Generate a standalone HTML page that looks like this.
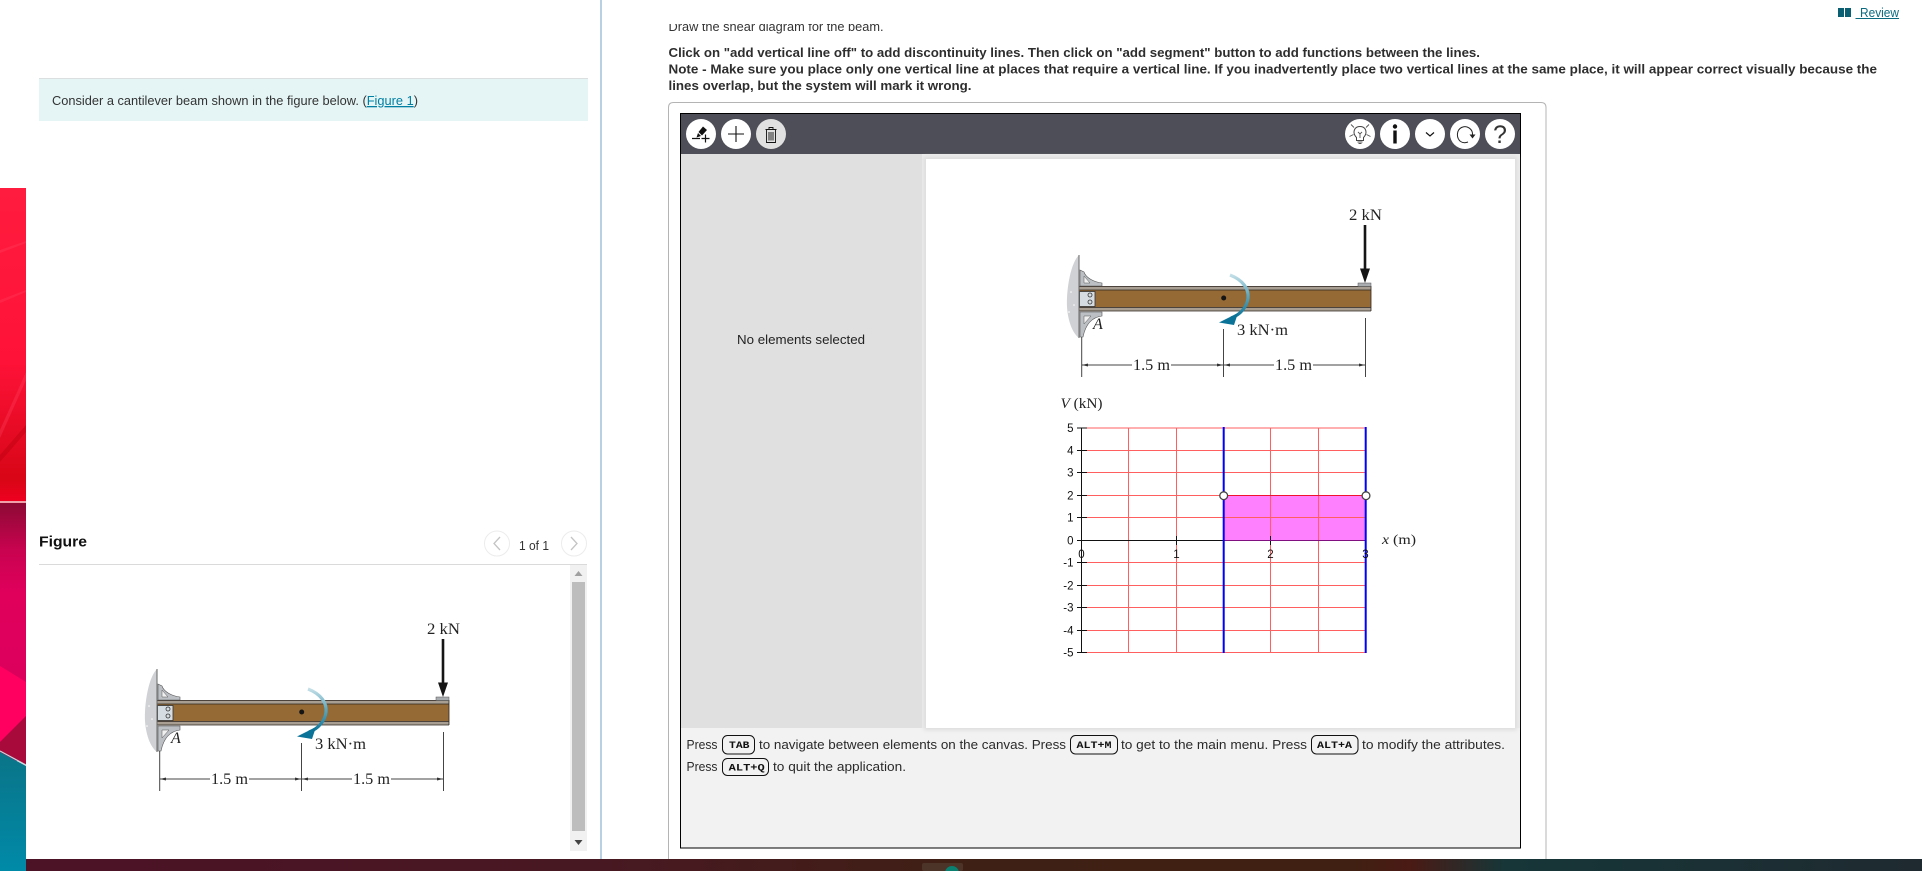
<!DOCTYPE html>
<html lang="en">
<head>
<meta charset="utf-8">
<title>Shear diagram</title>
<style>
html,body{margin:0;padding:0;background:#fff;width:1922px;height:871px;overflow:hidden}
svg{display:block;position:absolute;left:0;top:0}
text{font-family:"Liberation Sans",Arial,sans-serif;fill:#333}
.b{font-weight:700;font-size:13px;fill:#2e2e2e}
.h{font-size:13px;fill:#2a2a2a}
.k{font-family:"Liberation Mono",monospace;font-weight:700;font-size:10px;fill:#111}
.s{font-family:"Liberation Serif",serif;font-size:16px;fill:#222}
.t{font-size:11.5px;fill:#111}
</style>
</head>
<body>
<svg width="1922" height="871" viewBox="0 0 1922 871" xmlns="http://www.w3.org/2000/svg">
<defs>
<linearGradient id="red" x1="0" y1="0" x2="0" y2="1">
<stop offset="0" stop-color="#ff1c3e"/><stop offset=".55" stop-color="#ff1238"/><stop offset=".8" stop-color="#e40a22"/><stop offset=".93" stop-color="#d80616"/><stop offset="1" stop-color="#f00020"/>
</linearGradient>
<linearGradient id="crim" x1="0" y1="0" x2="0" y2="1">
<stop offset="0" stop-color="#8c0a34"/><stop offset=".18" stop-color="#c8034f"/><stop offset=".35" stop-color="#e0005c"/><stop offset="1" stop-color="#d8005c"/>
</linearGradient>
<linearGradient id="teal" x1="0" y1="0" x2="0" y2="1">
<stop offset="0" stop-color="#0a7488"/><stop offset="1" stop-color="#008aa8"/>
</linearGradient>
<linearGradient id="bar" x1="0" y1="0" x2="1" y2="0">
<stop offset="0" stop-color="#4c1226"/><stop offset=".3" stop-color="#481822"/><stop offset=".5" stop-color="#3f2014"/><stop offset=".7" stop-color="#402012"/><stop offset=".73" stop-color="#4a1a14"/><stop offset=".78" stop-color="#163638"/><stop offset="1" stop-color="#1f2a30"/>
</linearGradient>
<linearGradient id="arc" x1="0" y1="0" x2="0" y2="1">
<stop offset="0" stop-color="#c4dfe7"/><stop offset=".45" stop-color="#62aac0"/><stop offset="1" stop-color="#0b7397"/>
</linearGradient>
<clipPath id="cl"><rect x="660" y="24" width="300" height="12"/></clipPath>
<filter id="sh" x="-5%" y="-5%" width="110%" height="110%"><feGaussianBlur stdDeviation="2"/></filter>
<g id="beam">
<path d="M1079 255C1072 262 1068 280 1067 298C1066 315 1071 332 1079 338Z" fill="#d0d1d4"/>
<circle cx="1071" cy="292" r=".8" fill="#fff"/><circle cx="1074" cy="305" r=".8" fill="#fff"/><circle cx="1069" cy="312" r=".8" fill="#fff"/>
<path d="M1080 270L1084 272C1086 278 1094 282 1102 283V286H1080Z" fill="#bcc0c4" stroke="#555" stroke-width=".6"/>
<path d="M1084 276L1090 283H1084Z" fill="#f0f0f0" stroke="#555" stroke-width=".5"/>
<path d="M1080 337V312H1102V316C1094 317 1086 322 1083 337Z" fill="#bcc0c4" stroke="#555" stroke-width=".6"/>
<path d="M1084 316H1091L1084 324Z" fill="#f0f0f0" stroke="#555" stroke-width=".5"/>
<rect x="1079" y="286" width="292" height="25" fill="#956a35"/>
<rect x="1079" y="286" width="292" height="4" fill="#a89f92"/>
<rect x="1079" y="307" width="292" height="4" fill="#a89f92"/>
<path d="M1079 286.500H1371M1079 290H1371M1079 307.500H1371M1079 311H1371M1371 286V311" stroke="#2e2620" stroke-width=".8" fill="none"/>
<rect x="1079.500" y="291.500" width="15.500" height="15" fill="#d5dce2" stroke="#333" stroke-width=".8"/>
<circle cx="1090" cy="295" r="2" fill="none" stroke="#333" stroke-width=".8"/><circle cx="1090" cy="302" r="2" fill="none" stroke="#333" stroke-width=".8"/>
<rect x="1358" y="283" width="13" height="3.500" fill="#a9adb0" stroke="#555" stroke-width=".5"/>
<path d="M1079 255V338" stroke="#666" stroke-width="1"/>
<circle cx="1223.700" cy="298" r="2.500" fill="#151515"/>
<path d="M1230 275C1243 280 1249 289 1248 298C1247 307 1240 315 1231 318" fill="none" stroke="url(#arc)" stroke-width="3.200"/>
<path d="M1219 322.500L1238 313L1234 325Z" fill="#0b7397"/>
<path d="M1365 225V270" stroke="#151515" stroke-width="2.600"/>
<path d="M1360 268.500H1370L1365 283Z" fill="#151515"/>
<g stroke="#444" stroke-width="1" fill="none">
<path d="M1081.700 337V377M1223.500 329V377M1365.500 318V377"/>
<path d="M1082 365H1132M1171 365H1223M1224 365H1274M1313 365H1365"/>
</g>
<path d="M1082 365L1088 363.500V366.500ZM1223 365L1217 363.500V366.500ZM1224 365L1230 363.500V366.500ZM1365 365L1359 363.500V366.500Z" fill="#333"/>
</g>
</defs>

<!-- left wallpaper strip -->
<rect x="0" y="188" width="26" height="314" fill="url(#red)"/>
<path d="M0 250L26 241V243L0 253ZM0 300L26 290V292L0 303ZM0 430L26 372V380L0 438Z" fill="#ff4a62" opacity=".3"/>
<path d="M0 455L26 425V432L0 462Z" fill="#b80010" opacity=".4"/>
<rect x="0" y="501" width="26" height="2.500" fill="#f0a0a8"/>
<rect x="0" y="503" width="26" height="258" fill="url(#crim)"/>
<path d="M0 666L26 682V716L0 742Z" fill="#ff0060"/>
<path d="M0 742L26 716V765L0 752Z" fill="#a80a3c"/>
<path d="M0 752L26 766V871H0Z" fill="url(#teal)"/>
<path d="M0 751L26 765" stroke="#c8d8dc" stroke-width="1.200"/>

<!-- pane divider -->
<rect x="600" y="0" width="2" height="859" fill="#b9d0e2"/>

<!-- intro -->
<rect x="39" y="78" width="549" height="43" fill="#e5f5f5"/>
<rect x="39" y="78" width="549" height="1" fill="#dcdfdf"/>
<text x="52" y="105" textLength="366" lengthAdjust="spacingAndGlyphs" style="font-size:13px">Consider a cantilever beam shown in the figure below. (<tspan text-decoration="underline" style="fill:#007fa3">Figure 1</tspan>)</text>

<!-- figure panel -->
<text x="39" y="546.500" textLength="48" lengthAdjust="spacingAndGlyphs" style="font-size:15px;font-weight:700;fill:#111">Figure</text>
<circle cx="497" cy="543.500" r="12.500" fill="#fff" stroke="#ececec" stroke-width="1"/>
<path d="M500 537L494 543.500L500 550" fill="none" stroke="#c4c4c4" stroke-width="1.300"/>
<text x="519" y="550" textLength="30" lengthAdjust="spacingAndGlyphs" style="font-size:13px;fill:#333">1 of 1</text>
<circle cx="574" cy="543.500" r="12.500" fill="#fff" stroke="#ececec" stroke-width="1"/>
<path d="M571 537L577 543.500L571 550" fill="none" stroke="#c4c4c4" stroke-width="1.300"/>
<rect x="39" y="564" width="548" height="1" fill="#dadada"/>
<rect x="570" y="565" width="17" height="286" fill="#f1f1f1"/>
<rect x="572" y="582" width="13" height="249" fill="#bdbdbd"/>
<path d="M578.500 571L582.500 576H574.500Z" fill="#a0a0a0"/>
<path d="M578.500 845L582.500 840H574.500Z" fill="#444"/>

<g transform="translate(-922 414)">
<use href="#beam"/>
<text class="s" x="1349" y="220" textLength="33" lengthAdjust="spacingAndGlyphs">2 kN</text>
<text class="s" x="1237" y="335" textLength="51" lengthAdjust="spacingAndGlyphs">3 kN·m</text>
<text class="s" x="1093" y="329" style="font-style:italic">A</text>
<text class="s" x="1133" y="370" textLength="37" lengthAdjust="spacingAndGlyphs">1.5 m</text>
<text class="s" x="1275" y="370" textLength="37" lengthAdjust="spacingAndGlyphs">1.5 m</text>
</g>

<!-- review -->
<path d="M1838 8H1844V17H1838ZM1845 8H1851V17H1845Z" fill="#0a5f73"/>
<text x="1860" y="17" textLength="39" lengthAdjust="spacingAndGlyphs" style="font-size:13px;fill:#0a6a80">Review</text>
<rect x="1855.500" y="18" width="43.500" height="1" fill="#0a6a80"/>

<!-- instructions -->
<g clip-path="url(#cl)"><text x="668.500" y="31" textLength="215" lengthAdjust="spacingAndGlyphs" style="font-size:13px">Draw the shear diagram for the beam.</text></g>
<text class="b" x="668.500" y="57" textLength="811.500" lengthAdjust="spacingAndGlyphs">Click on "add vertical line off" to add discontinuity lines. Then click on "add segment" button to add functions between the lines.</text>
<text class="b" x="668.500" y="73.500" textLength="1208.500" lengthAdjust="spacingAndGlyphs">Note - Make sure you place only one vertical line at places that require a vertical line. If you inadvertently place two vertical lines at the same place, it will appear correct visually because the</text>
<text class="b" x="668.500" y="90" textLength="303" lengthAdjust="spacingAndGlyphs">lines overlap, but the system will mark it wrong.</text>

<!-- applet frame -->
<path d="M668.500 870V107.500Q668.500 102.500 673.500 102.500H1541Q1546 102.500 1546 107.500V870" fill="#fff" stroke="#b4b4b4" stroke-width="1"/>
<rect x="680.500" y="113.500" width="840" height="734.500" fill="#f2f2f2" stroke="#000" stroke-width="1"/>
<rect x="681" y="114" width="839" height="40" fill="#4d4e57"/>
<rect x="681" y="154" width="241" height="574" fill="#e0e0e0"/>
<rect x="922" y="154" width="598" height="574" fill="#ececec"/>
<rect x="924" y="157" width="593" height="573" fill="#dcdcdc" filter="url(#sh)"/>
<rect x="926" y="159" width="589" height="569" fill="#fff"/>

<!-- taskbar, above the applet frame -->
<rect x="26" y="859" width="1896" height="12" fill="url(#bar)"/>
<rect x="922" y="863" width="41" height="8" rx="2" fill="#4c3429"/>
<circle cx="952" cy="873" r="7" fill="#0a8070"/>

<!-- toolbar buttons -->
<circle cx="701" cy="134" r="15" fill="#fff"/>
<path d="M703 126.500L707 130L702 135.500L698.500 132Z" fill="#111"/>
<path d="M698 133L701 136L696.500 137.500Z" fill="#111"/>
<path d="M692 138.500H700M701.500 138.500H709.500M705.500 134.500V142.500" stroke="#111" stroke-width="1.200" fill="none"/>
<circle cx="736" cy="134" r="15" fill="#fff"/>
<path d="M728 134H744M736 126V142" stroke="#111" stroke-width="1.100" fill="none"/>
<circle cx="771" cy="134" r="15" fill="#e0e0e0"/>
<path d="M765.500 129.500H776.500M769 129.500V127.500H773V129.500M766.500 129.500V142.500H775.500V129.500M769 132V140.500M771 132V140.500M773 132V140.500" stroke="#111" stroke-width=".9" fill="none"/>

<circle cx="1360" cy="134" r="15" fill="#fff"/>
<path d="M1356.500 137.500C1352 133 1354 126.500 1360 126.500C1366 126.500 1368 133 1363.500 137.500V140.500H1356.500Z" fill="none" stroke="#444" stroke-width="1"/>
<path d="M1357.500 142H1362.500M1358.500 143.500H1361.500M1358 132L1360 134L1362 132M1360 134V138M1351 124.500L1354 127.500M1369 124.500L1366 127.500M1349.500 136.500L1353.500 134.500M1370.500 136.500L1366.500 134.500" stroke="#555" stroke-width=".9" fill="none"/>
<circle cx="1395" cy="134" r="15" fill="#fff"/>
<circle cx="1395" cy="126.500" r="2.200" fill="#111"/>
<rect x="1393.300" y="130.500" width="3.400" height="13" fill="#111"/>
<circle cx="1430" cy="134" r="15" fill="#fff"/>
<path d="M1426 132.500L1430 136L1434 132.500" fill="none" stroke="#111" stroke-width="1.200"/>
<circle cx="1465" cy="134" r="15" fill="#fff"/>
<path d="M1460.500 141.500C1456 137.500 1456.500 130 1461.500 127.500C1467 125 1473 129 1472.500 135" fill="none" stroke="#222" stroke-width="1"/>
<path d="M1469.500 134.500H1475.500L1472.500 138.500Z" fill="#222"/>
<path d="M1460.500 141.500C1463 143 1465.500 143 1468 142" fill="none" stroke="#222" stroke-width="1"/>
<circle cx="1500" cy="134" r="15" fill="#fff"/>
<text x="1500" y="143" text-anchor="middle" style="font-size:25px;font-weight:400;fill:#333">?</text>

<text x="737" y="344" textLength="128" lengthAdjust="spacingAndGlyphs" style="font-size:13px;fill:#222">No elements selected</text>

<!-- canvas beam -->
<use href="#beam"/>
<text class="s" x="1349" y="220" textLength="33" lengthAdjust="spacingAndGlyphs">2 kN</text>
<text class="s" x="1237" y="335" textLength="51" lengthAdjust="spacingAndGlyphs">3 kN·m</text>
<text class="s" x="1093" y="329" style="font-style:italic">A</text>
<text class="s" x="1133" y="370" textLength="37" lengthAdjust="spacingAndGlyphs">1.5 m</text>
<text class="s" x="1275" y="370" textLength="37" lengthAdjust="spacingAndGlyphs">1.5 m</text>

<!-- graph -->
<text x="1060.500" y="408" style="font-family:'Liberation Serif',serif;font-size:15px;fill:#222" textLength="42" lengthAdjust="spacingAndGlyphs"><tspan style="font-style:italic">V</tspan> (kN)</text>
<rect x="1224" y="495.500" width="141.500" height="44.800" fill="#ff80ff"/>
<g stroke="#ff5f5f" stroke-width="1" fill="none">
<path d="M1087 428H1366M1087 450.500H1366M1087 472.500H1366M1087 495.500H1366M1087 517.500H1366M1087 562.500H1366M1087 585.500H1366M1087 607.500H1366M1087 630.500H1366M1087 652.500H1366"/>
<path d="M1128.500 428V652M1176.500 428V652M1270.500 428V652M1318.500 428V652"/>
</g>
<path d="M1224 495.500H1366" stroke="#f01030" stroke-width="1"/>
<g stroke="#111" stroke-width="1" fill="none">
<path d="M1081.500 428V652.500"/>
<path d="M1077 428H1087M1077 450.500H1087M1077 472.500H1087M1077 495.500H1087M1077 517.500H1087M1077 540.500H1087M1077 562.500H1087M1077 585.500H1087M1077 607.500H1087M1077 630.500H1087M1077 652.500H1087"/>
<path d="M1082 540.500H1224M1176.500 536V545M1270.500 536V545"/>
</g>
<path d="M1224 540.500H1366" stroke="#80107f" stroke-width="1"/>
<path d="M1223.700 427V653M1365.700 427V653" stroke="#0000ff" stroke-width="2"/>
<circle cx="1223.700" cy="495.700" r="3.900" fill="#fff" stroke="#444" stroke-width="1.300"/>
<circle cx="1366" cy="495.700" r="3.900" fill="#fff" stroke="#444" stroke-width="1.300"/>
<g text-anchor="end">
<text class="t" x="1073.500" y="432">5</text>
<text class="t" x="1073.500" y="454.500">4</text>
<text class="t" x="1073.500" y="476.500">3</text>
<text class="t" x="1073.500" y="499.500">2</text>
<text class="t" x="1073.500" y="521.500">1</text>
<text class="t" x="1073.500" y="544.500">0</text>
<text class="t" x="1073.500" y="566.500">-1</text>
<text class="t" x="1073.500" y="589.500">-2</text>
<text class="t" x="1073.500" y="611.500">-3</text>
<text class="t" x="1073.500" y="634.500">-4</text>
<text class="t" x="1073.500" y="656.500">-5</text>
</g>
<g text-anchor="middle">
<text class="t" x="1081.500" y="558">0</text>
<text class="t" x="1176.500" y="558">1</text>
<text class="t" x="1270.500" y="558">2</text>
<text class="t" x="1365.500" y="558">3</text>
</g>
<text x="1382" y="544" textLength="34" lengthAdjust="spacingAndGlyphs" style="font-family:'Liberation Serif',serif;font-size:14px;fill:#222"><tspan style="font-style:italic">x</tspan> (m)</text>

<!-- hint -->
<text class="h" x="686.500" y="749" textLength="31" lengthAdjust="spacingAndGlyphs">Press</text>
<rect x="722.500" y="735.500" width="32" height="18.500" rx="5" fill="none" stroke="#111"/>
<text class="k" x="729" y="748" textLength="20.500" lengthAdjust="spacingAndGlyphs">TAB</text>
<text class="h" x="759" y="749" textLength="307" lengthAdjust="spacingAndGlyphs">to navigate between elements on the canvas. Press</text>
<rect x="1070.500" y="735.500" width="47" height="18.500" rx="5" fill="none" stroke="#111"/>
<text class="k" x="1076.500" y="748" textLength="35" lengthAdjust="spacingAndGlyphs">ALT+M</text>
<text class="h" x="1121" y="749" textLength="186" lengthAdjust="spacingAndGlyphs">to get to the main menu. Press</text>
<rect x="1311.500" y="735.500" width="46.500" height="18.500" rx="5" fill="none" stroke="#111"/>
<text class="k" x="1317" y="748" textLength="35" lengthAdjust="spacingAndGlyphs">ALT+A</text>
<text class="h" x="1362" y="749" textLength="143" lengthAdjust="spacingAndGlyphs">to modify the attributes.</text>
<text class="h" x="686.500" y="771" textLength="31" lengthAdjust="spacingAndGlyphs">Press</text>
<rect x="722.500" y="758.500" width="46" height="17" rx="5" fill="none" stroke="#111"/>
<text class="k" x="728.700" y="770.500" textLength="36" lengthAdjust="spacingAndGlyphs">ALT+Q</text>
<text class="h" x="773" y="771" textLength="133" lengthAdjust="spacingAndGlyphs">to quit the application.</text>
</svg>
</body>
</html>
